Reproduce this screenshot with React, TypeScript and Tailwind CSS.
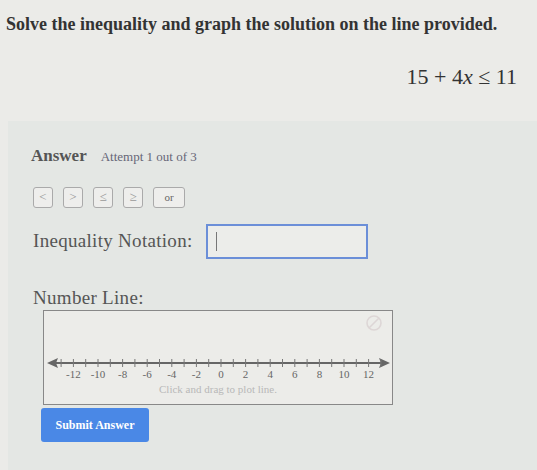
import React from 'react';

const serif = { fontFamily: '"Liberation Serif", "DejaVu Serif", serif' };

function NumberLine() {
  const x0 = 177; // position of 0 inside svg
  const unit = 12.3;
  const ticks = [];
  for (let i = -13; i <= 13; i++) ticks.push(i);
  const labels = [-12, -10, -8, -6, -4, -2, 0, 2, 4, 6, 8, 10, 12];
  return (
    <svg width="348" height="93" viewBox="0 0 348 93" className="block">
      {/* clear icon */}
      <g stroke="#ddd6d6" strokeWidth="1.6" fill="none">
        <circle cx="330" cy="12" r="7" />
        <line x1="325" y1="17" x2="335" y2="7" />
      </g>
      <line x1="8" y1="52" x2="340" y2="52" stroke="#666" strokeWidth="2" />
      <path d="M3 52 L14 47 L12 52 L14 57 Z" fill="#666" />
      <path d="M346 52 L335 47 L337 52 L335 57 Z" fill="#666" />
      {ticks.map((t) => (
        <line key={t} x1={x0 + t * unit} y1="48" x2={x0 + t * unit} y2="56" stroke="#777" strokeWidth="1" />
      ))}
      {labels.map((l) => (
        <text
          key={l}
          x={x0 + l * unit}
          y="67"
          textAnchor="middle"
          fontSize="11"
          fill="#666"
          fontFamily='"Liberation Serif", serif'
        >
          {l}
        </text>
      ))}
      <text x="174" y="82" textAnchor="middle" fontSize="11" fill="#b8b8b8" fontFamily='"Liberation Serif", serif'>
        Click and drag to plot line.
      </text>
    </svg>
  );
}

export default function App() {
  return (
    <div className="w-[537px] h-[470px] bg-[#ebebe8] overflow-hidden flex flex-col" style={serif}>
      {/* Question */}
      <div className="h-[121px] flex flex-col px-[6px] pt-[12px]">
        <h1 className="text-[18px] font-bold text-[#333] leading-[24px]">
          Solve the inequality and graph the solution on the line provided.
        </h1>
        <div className="mt-[24px] pr-[14px] flex justify-end text-[22px] text-[#333]">
          <span>
            15 + 4<i>x</i> ≤ 11
          </span>
        </div>
      </div>

      {/* Answer panel */}
      <div className="flex-1 ml-[8px] bg-[#e4e7e4] pl-[23px] pt-[22px] flex flex-col">
        <div className="flex items-baseline gap-[14px]">
          <span className="text-[17px] font-bold text-[#555]">Answer</span>
          <span className="text-[13px] text-[#667]">Attempt 1 out of 3</span>
        </div>

        <div className="mt-[18px] ml-[2px] flex gap-[10px]">
          {['<', '>', '≤', '≥'].map((s) => (
            <div
              key={s}
              className="w-[20px] h-[21px] border border-[#aaa] rounded-[3px] bg-[#eeeeec] flex items-center justify-center text-[13px] text-[#999]"
            >
              {s}
            </div>
          ))}
          <div className="w-[32px] h-[21px] border border-[#aaa] rounded-[3px] bg-[#eeeeec] flex items-center justify-center text-[11px] text-[#666]">
            or
          </div>
        </div>

        <div className="mt-[16px] ml-[2px] flex items-center gap-[13px]">
          <span className="text-[19px] tracking-[0.3px] text-[#555]">Inequality Notation:</span>
          <div className="w-[162px] h-[35px] border-2 border-[#6b8fd8] bg-[#ecedea] flex items-center pl-[8px]">
            <div className="w-px h-[19px] bg-[#777]" />
          </div>
        </div>

        <div className="mt-[28px] ml-[2px] text-[19px] tracking-[0.3px] text-[#555] leading-[22px]">Number Line:</div>

        <div className="mt-[1px] ml-[12px] w-[350px] h-[95px] border border-[#888] bg-[#ecece9]">
          <NumberLine />
        </div>

        <button className="mt-[3px] ml-[10px] w-[108px] h-[34px] rounded-[3px] bg-[#4a88e6] text-white text-[12px] font-bold">
          Submit Answer
        </button>
      </div>
    </div>
  );
}
